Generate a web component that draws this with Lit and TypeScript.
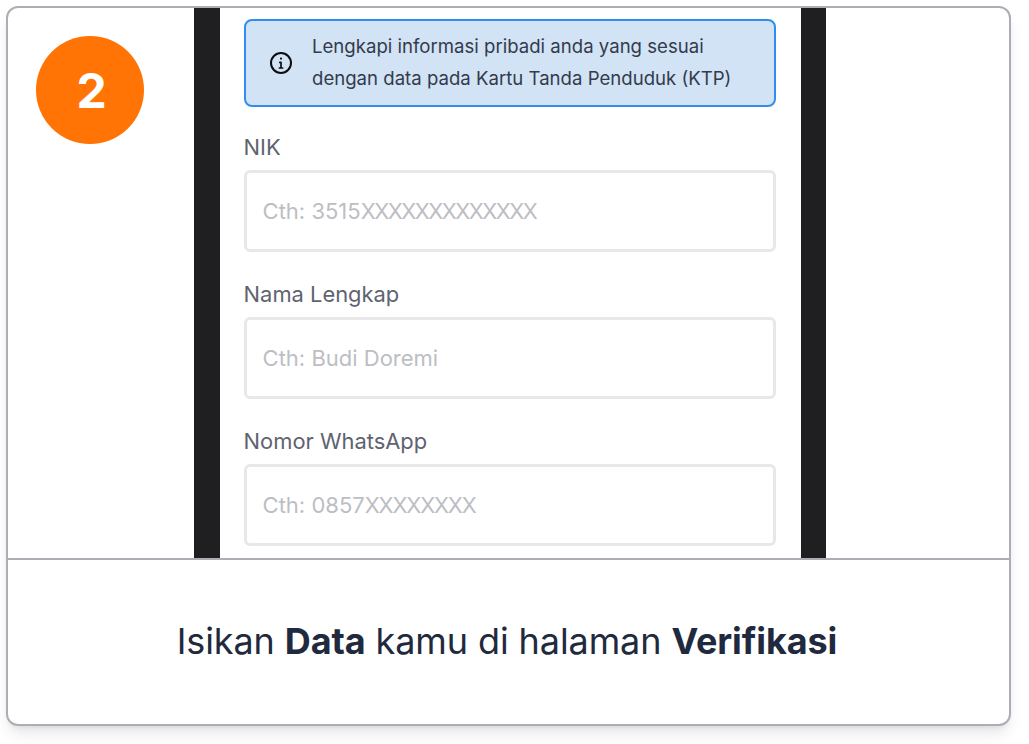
import { LitElement, html, css } from "lit";
import { customElement } from "lit/decorators.js";

@customElement("app-root")
export class AppRoot extends LitElement {
  static styles = css`
    :host { display: block; width: 1029px; height: 744px; background: #fff; font-family: Inter, "Liberation Sans", sans-serif; overflow: hidden; }
    .page { padding: 6px 18px 18px 6px; }
    .card { box-sizing: border-box; width: 1005px; height: 720px; border: 2px solid #abaeb5; border-radius: 12px; background: #fff; box-shadow: 0 10px 15px -3px rgba(0,0,0,.1), 0 4px 6px -4px rgba(0,0,0,.1); display: flex; flex-direction: column; overflow: hidden; }
    .top { height: 550px; display: flex; justify-content: center; position: relative; padding-left: 3px; flex: none; }
    .badge { position: absolute; left: 28px; top: 28px; width: 108px; height: 108px; border-radius: 50%; background: #ff7404; color: #fff; font-size: 48px; font-weight: 700; display: flex; align-items: center; justify-content: center; padding-left: 3px; box-sizing: border-box; }
    .phone { box-sizing: border-box; width: 632px; height: 100%; background: #fff; border-left: 26px solid #1f1f21; border-right: 25px solid #1f1f21; padding: 11px 25px 0 24px; display: flex; flex-direction: column; }
    .alert { box-sizing: border-box; height: 88px; flex: none; border: 2px solid #2f8fec; border-radius: 8px; background: #d1e3f5; display: flex; align-items: center; gap: 19px; padding-left: 23px; color: #343b4c; font-size: 18.6px; line-height: 32px; }
    .alert svg { flex: none; }
    .alert-text { padding-bottom: 2px; }
    .field { display: flex; flex-direction: column; gap: 9px; margin-top: 27px; }
    .field + .field { margin-top: 29px; }
    .label { font-size: 21.9px; line-height: 27px; color: #5f6370; font-weight: 400; margin-left: -.4px; }
    .input { box-sizing: border-box; height: 82px; border: 3px solid #e8e8e9; border-radius: 6px; display: flex; align-items: center; padding-left: 15.6px; color: #bdbec3; font-size: 22px; white-space: pre; }
    .caption { flex: 1; border-top: 2px solid #abaeb5; display: flex; align-items: center; justify-content: center; color: #1f2a3e; font-size: 36px; letter-spacing: -.1px; white-space: pre; padding: 0 3px 2px 0; }
    b { font-weight: 700; }
  `;

  render() {
    const fields: [string, string, string, number][] = [
      ["NIK", "Cth: 3515", "XXXXXXXXXXXXX", -1.5],
      ["Nama Lengkap", "Cth: Budi Doremi", "", 0],
      ["Nomor WhatsApp", "Cth: 0857", "XXXXXXXX", -1.15],
    ];
    return html`<div class="page"><div class="card">
      <div class="top">
        <div class="badge">2</div>
        <div class="phone">
          <div class="alert">
            <svg width="24" height="24" viewBox="0 0 24 24" fill="none" stroke="#0b0d10" stroke-width="2" stroke-linecap="round" stroke-linejoin="round"><circle cx="12" cy="12" r="10"/><path d="M10.8 11.4H12V17M10.4 17h3.2" stroke-width="1.7"/><circle cx="12" cy="7.6" r=".5" fill="#0b0d10" stroke-width="1.2"/></svg>
            <div class="alert-text">Lengkapi informasi pribadi anda yang sesuai<br />dengan data pada Kartu Tanda Penduduk (KTP)</div>
          </div>
          ${fields.map(([l, p, x, s]) => html`<div class="field"><div class="label">${l}</div><div class="input"><span>${p}</span><span style="letter-spacing:${s}px">${x}</span></div></div>`)}
        </div>
      </div>
      <div class="caption">Isikan <b>Data</b> kamu di halaman <b>Verifikasi</b></div>
    </div></div>`;
  }
}
